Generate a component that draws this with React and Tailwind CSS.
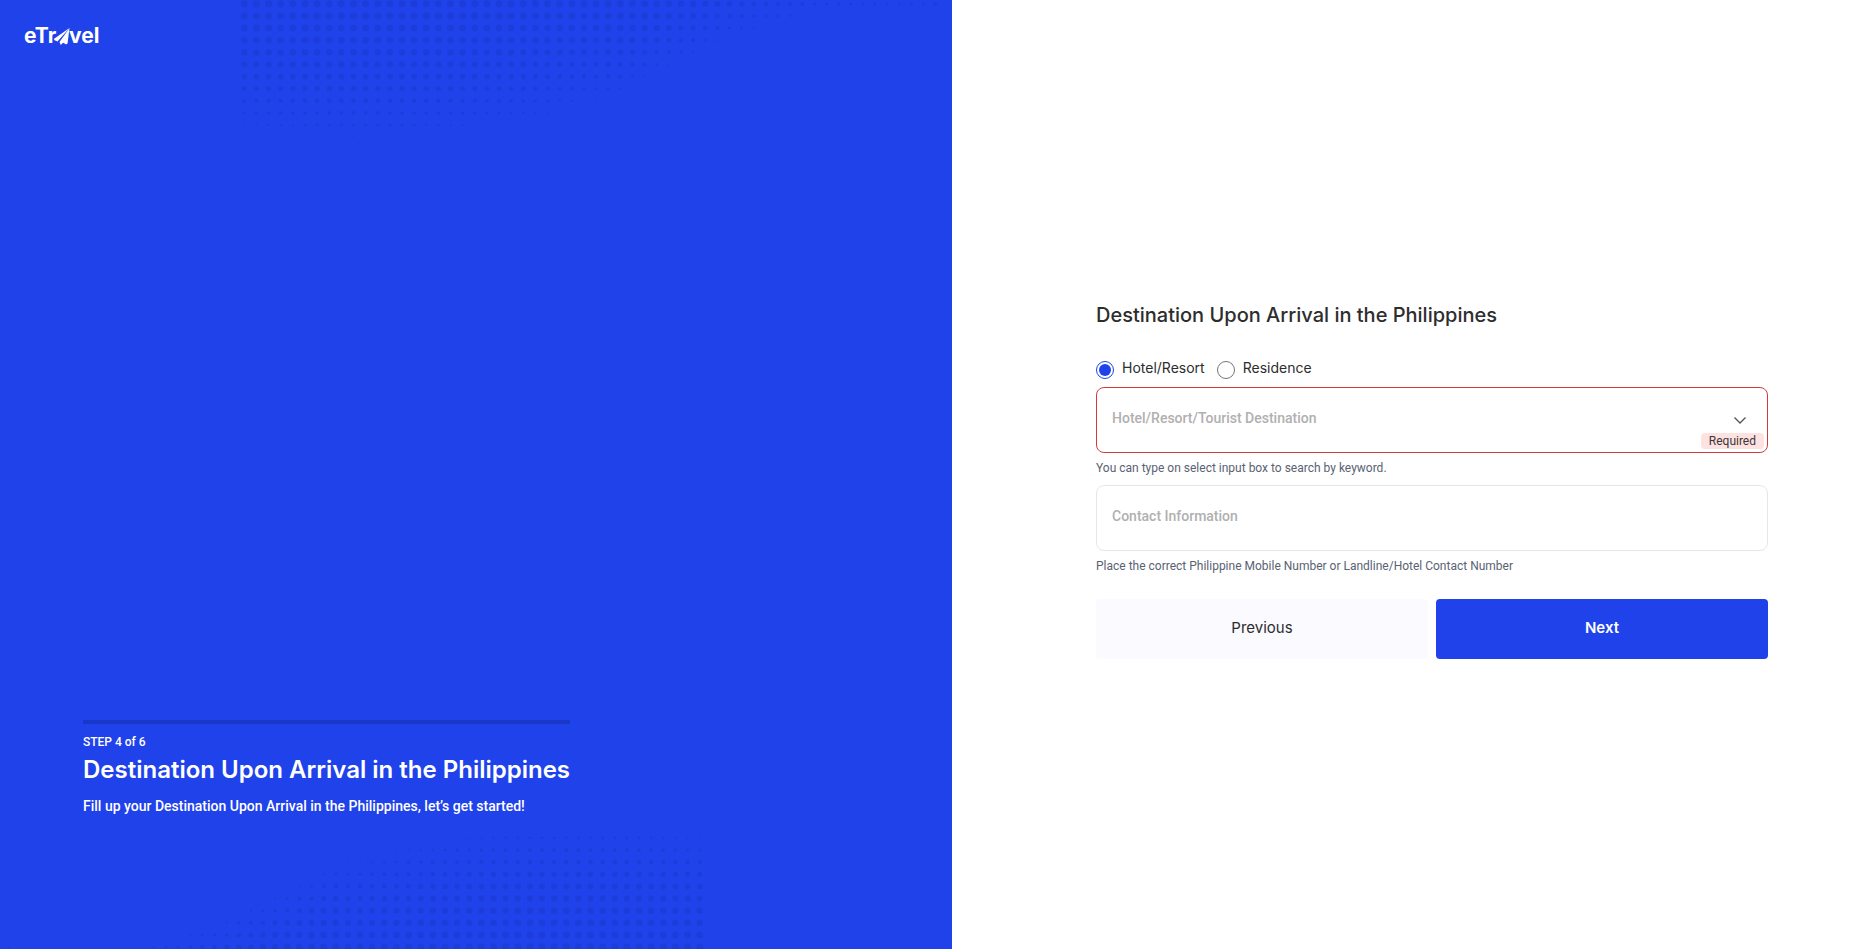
import { useState } from 'react';

const DOT_GAP = 12.13;

// lower edge of the halftone, as [x, y] points
const EDGE = [
  [240, 131], [268, 138], [350, 143], [440, 139], [523, 127], [572, 115],
  [608, 103], [632, 91], [656, 79], [680, 67], [705, 55], [730, 43],
  [765, 31], [825, 19], [870, 15], [900, 15], [920, 18], [950, 27],
];

function edgeAt(x) {
  for (let i = 1; i < EDGE.length; i++) {
    const [x0, y0] = EDGE[i - 1];
    const [x1, y1] = EDGE[i];
    if (x <= x1) return y0 + ((x - x0) / (x1 - x0)) * (y1 - y0);
  }
  return 0;
}

const dots = [];
for (let col = 0; col < 59; col++) {
  for (let row = 0; row < 12; row++) {
    const x = 244.3 + col * DOT_GAP;
    const y = 3.8 + row * DOT_GAP;
    const depth = edgeAt(x) - y;
    const falloff = x > 600 ? 32 : 45;
    if (depth > 0) dots.push({ x, y, r: 0.2 + 3.5 * (1 - Math.exp(-depth / falloff)) });
  }
}

function Halftone({ className }) {
  return (
    <svg width="944" height="152" viewBox="0 0 944 152" className={className} aria-hidden="true">
      {dots.map((dot) => (
        <circle key={`${dot.x}-${dot.y}`} cx={dot.x} cy={dot.y} r={dot.r} fill="#1d3ddb" />
      ))}
    </svg>
  );
}

function Logo() {
  return (
    <svg width="84" height="30" viewBox="0 -4 84 30" fill="#fff" role="img" aria-label="eTravel">
      <g className="font-['Inter'] text-[21px] font-bold">
        <text x="0" y="19">eTr</text>
        <text x="45" y="19">vel</text>
      </g>
      <path d="M45.5 4 L30.5 14.5 Q29.5 15.5 30.5 16.3 L33.5 17.5 Z" />
      <path d="M45.5 4 L35.5 18 L36.8 21 L39 18.8 L42 20.3 Q43.3 20.5 43.6 19 Z" />
    </svg>
  );
}

export default function App() {
  const [stay, setStay] = useState('hotel');
  const [destination, setDestination] = useState('');
  const [contact, setContact] = useState('');

  return (
    <div className="grid min-h-screen grid-cols-[952fr_901fr] bg-white font-['Roboto',sans-serif] text-[#2d2d2d]">
      <aside className="relative flex flex-col justify-between overflow-hidden bg-[#1f42eb] text-white">
        <Halftone className="absolute top-0 left-0" />
        <Halftone className="absolute -bottom-3.5 left-0 rotate-180" />
        <header className="relative px-6 pt-5">
          <Logo />
        </header>
        <div className="relative w-fit px-[83px] pb-[131px]">
          <div className="h-1 bg-[#1a38c7]" />
          <p className="mt-2.5 text-xs leading-4 font-medium">STEP 4 of 6</p>
          <h1 className="mt-1 font-['Inter',sans-serif] text-2xl leading-8 font-semibold">
            Destination Upon Arrival in the Philippines
          </h1>
          <p className="mt-2 text-sm leading-6 font-medium">
            Fill up your Destination Upon Arrival in the Philippines, let’s get started!
          </p>
        </div>
      </aside>

      <main className="flex items-center justify-center pl-[59px]">
        <form className="w-full max-w-2xl pt-2" onSubmit={(e) => e.preventDefault()}>
          <h2 className="font-['Inter',sans-serif] text-xl leading-8 font-medium">
            Destination Upon Arrival in the Philippines
          </h2>

          <div className="mt-[22px] flex gap-3 pt-2 pb-2 font-['Inter',sans-serif]">
            {[
              ['hotel', 'Hotel/Resort'],
              ['residence', 'Residence'],
            ].map(([value, label]) => (
              <label key={value} className="flex gap-2 text-sm leading-3.5">
                <input
                  type="radio"
                  name="stay"
                  value={value}
                  checked={stay === value}
                  onChange={() => setStay(value)}
                  className="size-[18px] appearance-none rounded-full border border-[#767676] bg-white bg-clip-content p-[2px] checked:border-[#1f42eb] checked:bg-[#1f42eb]"
                />
                {label}
              </label>
            ))}
          </div>

          <div className="relative">
            <select
              aria-label="Hotel/Resort/Tourist Destination"
              value={destination}
              onChange={(e) => setDestination(e.target.value)}
              className="h-[66px] w-full appearance-none rounded-lg border border-[#d33a3a] bg-white px-[15px] pb-1 text-sm font-medium text-[#b0b0b0]"
            >
              <option value="">Hotel/Resort/Tourist Destination</option>
            </select>
            <svg
              className="pointer-events-none absolute top-7 right-[21px]"
              width="14"
              height="10"
              viewBox="0 0 14 10"
              fill="none"
              stroke="#52525b"
              strokeWidth="1.3"
            >
              <path d="M1.5 2.5 L7 8 L12.5 2.5" />
            </svg>
            <span className="absolute right-1 bottom-1 rounded bg-[#fde2e2] px-2 text-xs leading-4 text-[#3d3636]">
              Required
            </span>
          </div>
          <p className="mt-1 mb-1.5 text-xs leading-[22px] text-[#596273]">
            You can type on select input box to search by keyword.
          </p>

          <input
            type="text"
            aria-label="Contact Information"
            placeholder="Contact Information"
            value={contact}
            onChange={(e) => setContact(e.target.value)}
            className="h-[66px] w-full rounded-lg border border-gray-200 px-[15px] pb-1 text-sm font-medium placeholder:text-[#b0b0b0]"
          />
          <p className="mt-1 text-xs leading-[22px] text-[#596273]">
            Place the correct Philippine Mobile Number or Landline/Hotel Contact Number
          </p>

          <div className="mt-[22px] grid grid-cols-2 gap-2 font-['Inter',sans-serif] text-[15px]">
            <button type="button" className="h-15 rounded bg-[#fafaff]">
              Previous
            </button>
            <button type="submit" className="h-15 rounded bg-[#1f42eb] font-semibold text-white">
              Next
            </button>
          </div>
        </form>
      </main>
    </div>
  );
}
